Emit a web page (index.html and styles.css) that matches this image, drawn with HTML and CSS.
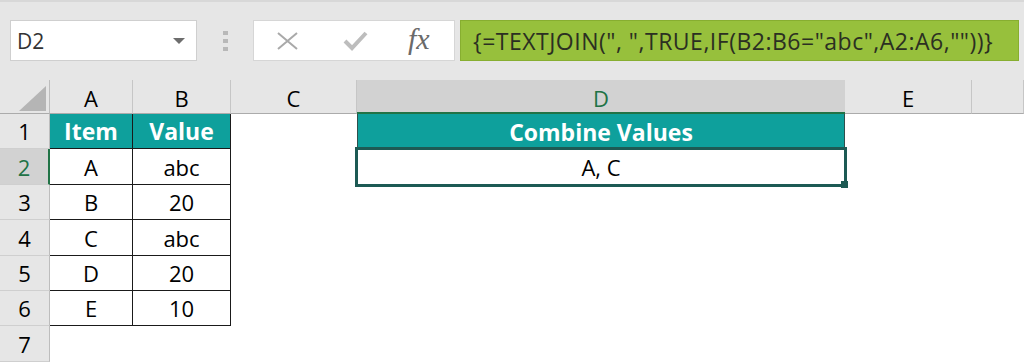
FILE: index.html
```html
<!DOCTYPE html>
<html lang="en">
<head>
	<meta charset="UTF-8">
	<title>TEXTJOIN</title>
	<link rel="stylesheet" href="styles.css">
</head>
<body>
<!-- 名称框 + 编辑栏 -->
<div class="toolbar">
	<div class="namebox">
		<span>D2</span>
		<svg class="drop" width="12" height="6" viewBox="0 0 12 6"><polygon points="0,0 12,0 6,6" fill="#6d6d6d"/></svg>
	</div>
	<div class="grip"><i></i><i></i><i></i></div>
	<div class="fbuttons">
		<svg class="icon-x" width="21" height="18" viewBox="0 0 21 18">
			<path d="M1 1 L20 17 M20 1 L1 17" stroke="#a9a9a9" stroke-width="2" fill="none"/>
		</svg>
		<svg class="icon-ok" width="25" height="20" viewBox="0 0 25 20">
			<path d="M2 10 L9 17 L23 2" stroke="#bdbdbd" stroke-width="4" fill="none"/>
		</svg>
		<span class="fx">fx</span>
	</div>
	<div class="formula">{=TEXTJOIN(", ",TRUE,IF(B2:B6="abc",A2:A6,""))}</div>
</div>

<!-- 工作表 -->
<div class="sheet">
	<div class="corner">
		<svg width="27" height="25" viewBox="0 0 27 25"><polygon points="27,0 27,25 0,25" fill="#b5b5b5"/></svg>
	</div>
	<div class="ch">A</div>
	<div class="ch">B</div>
	<div class="ch">C</div>
	<div class="ch ch-sel">D</div>
	<div class="ch">E</div>
	<div class="ch"></div>

	<div class="rh">1</div>
	<div class="cell t head">Item</div>
	<div class="cell t head">Value</div>
	<div class="cell"></div>
	<div class="cell head dhead">Combine Values</div>
	<div class="cell"></div>
	<div class="cell"></div>

	<div class="rh rh-sel">2</div>
	<div class="cell t">A</div>
	<div class="cell t">abc</div>
	<div class="cell"></div>
	<div class="cell active">A, C<span class="sel"><b></b></span></div>
	<div class="cell"></div>
	<div class="cell"></div>

	<div class="rh">3</div>
	<div class="cell t">B</div>
	<div class="cell t">20</div>
	<div class="cell"></div>
	<div class="cell"></div>
	<div class="cell"></div>
	<div class="cell"></div>

	<div class="rh">4</div>
	<div class="cell t">C</div>
	<div class="cell t">abc</div>
	<div class="cell"></div>
	<div class="cell"></div>
	<div class="cell"></div>
	<div class="cell"></div>

	<div class="rh">5</div>
	<div class="cell t">D</div>
	<div class="cell t">20</div>
	<div class="cell"></div>
	<div class="cell"></div>
	<div class="cell"></div>
	<div class="cell"></div>

	<div class="rh">6</div>
	<div class="cell t">E</div>
	<div class="cell t">10</div>
	<div class="cell"></div>
	<div class="cell"></div>
	<div class="cell"></div>
	<div class="cell"></div>

	<div class="rh">7</div>
	<div class="cell"></div>
	<div class="cell"></div>
	<div class="cell"></div>
	<div class="cell"></div>
	<div class="cell"></div>
	<div class="cell"></div>
</div>
</body>
</html>
```

FILE: styles.css
```css
* {
    margin: 0;
    padding: 0;
    box-sizing: border-box;
}

body {
    width: 1024px;
    height: 362px;
    overflow: hidden;
    background-color: #e6e6e6;
    font-family: "Open Sans", "Noto Sans", sans-serif;
    color: #000;
}

/*编辑栏*/
.toolbar {
    height: 80px;
    border-top: 2px solid #d8d8d8;
    padding: 18px 0 0 10px;
    display: flex;
    align-items: flex-start;
}

.namebox {
    width: 187px;
    height: 41px;
    background-color: #fff;
    border: 1px solid #cfcfcf;
    display: flex;
    align-items: center;
    justify-content: space-between;
    padding: 0 11px 0 6px;
    font-size: 21px;
    color: #333;
}

.grip {
    margin-left: 26px;
    margin-top: 11px;
    display: flex;
    flex-direction: column;
    gap: 4px;
}

.grip i {
    display: block;
    width: 5px;
    height: 4px;
    background-color: #b8b8b8;
}

.fbuttons {
    margin-left: 25px;
    width: 202px;
    height: 41px;
    background-color: #fff;
    border: 1px solid #d6d6d6;
    display: flex;
    align-items: center;
    padding-left: 23px;
}

.icon-x {
    margin-top: 1px;
}

.icon-ok {
    margin-left: 45px;
}

.fx {
    margin-left: 40px;
    font-family: "Liberation Serif", serif;
    font-style: italic;
    font-size: 30px;
    color: #6a6a6a;
    margin-top: -3px;
}

.formula {
    margin-left: 5px;
    width: 559px;
    height: 41px;
    background-color: #97c03c;
    border: 1px solid #87ae30;
    padding-left: 12px;
    display: flex;
    align-items: center;
    font-size: 23px;
    letter-spacing: 0.5px;
    color: #2b2f22;
    white-space: nowrap;
}

/*表格*/
.sheet {
    display: grid;
    grid-template-columns: 50px 83px 98px 126px 488px 127px 52px;
    grid-template-rows: 34px 35px 36px 35px 36px 35px 35px 36px;
    background-color: #fff;
}

.corner {
    background-color: #e6e6e6;
    border-right: 1px solid #bdbdbd;
    border-bottom: 1px solid #ababab;
    display: flex;
    align-items: flex-end;
    justify-content: flex-end;
    padding: 0 3px 2px 0;
}

/*列标题*/
.ch {
    background-color: #e6e6e6;
    border-right: 1px solid #c6c6c6;
    border-bottom: 1px solid #ababab;
    display: flex;
    align-items: center;
    justify-content: center;
    padding-top: 3px;
    font-size: 22px;
}

.ch-sel {
    background-color: #d2d2d2;
    color: #217346;
    border-right: none;
    border-bottom: 2px solid #217346;
}

/*行标题*/
.rh {
    background-color: #e6e6e6;
    border-right: 1px solid #bdbdbd;
    border-bottom: 1px solid #cfcfcf;
    display: flex;
    align-items: center;
    justify-content: center;
    font-size: 22px;
}

.rh-sel {
    background-color: #d2d2d2;
    color: #217346;
    border-right: 2px solid #217346;
}

.cell {
    display: flex;
    align-items: center;
    justify-content: center;
    font-size: 22px;
    position: relative;
}

/*A1:B6 带边框*/
.t {
    border-right: 1px solid #1a1a1a;
    border-bottom: 1px solid #1a1a1a;
}

.head {
    background-color: #0ea09c;
    color: #fff;
    font-weight: bold;
    font-size: 23px;
}

.dhead {
    border-left: 1px solid #2f4f4c;
    border-right: 1px solid #2f4f4c;
}

/*选中框*/
.sel {
    position: absolute;
    top: -2px;
    left: -2px;
    right: -2px;
    bottom: -2px;
    border: 3px solid #1d5a54;
}

.sel b {
    position: absolute;
    right: -4px;
    bottom: -4px;
    width: 7px;
    height: 7px;
    background-color: #1d5a54;
}
```
